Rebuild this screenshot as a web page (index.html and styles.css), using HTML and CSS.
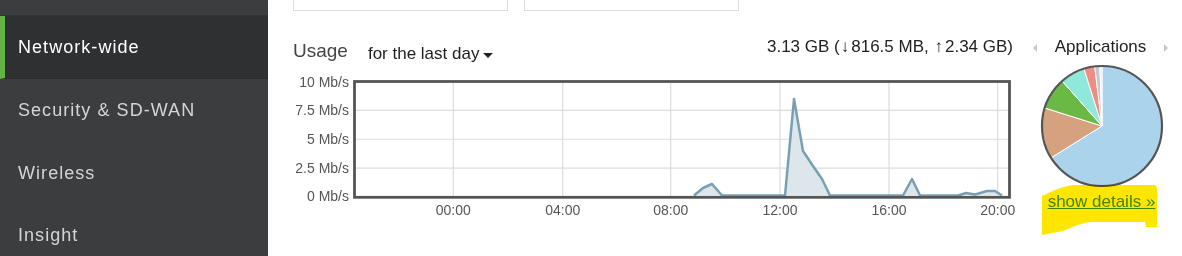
FILE: index.html
```html
<!DOCTYPE html>
<html>
<head>
<meta charset="utf-8">
<link rel="stylesheet" href="styles.css">
</head>
<body>
<div class="page">
  <nav class="sidebar">
    <div class="side-top"></div>
    <div class="nav-item active">Network-wide</div>
    <div class="nav-item">Security &amp; SD-WAN</div>
    <div class="nav-item">Wireless</div>
    <div class="nav-item">Insight</div>
  </nav>
  <main class="main">
    <div class="top-boxes">
      <div class="box"></div>
      <div class="box"></div>
    </div>
    <div class="content">
      <section class="usage">
        <div class="usage-head">
          <div class="usage-title">Usage</div>
          <div class="range">for the last day<span class="caret"></span></div>
          <div class="stats">3.13 GB (<span class="arr">↓</span>816.5 MB, <span class="arr">↑</span>2.34 GB)</div>
        </div>
        <svg class="chart" width="722" height="150" viewBox="0 0 722 150">
          <g class="grid">
            <line x1="61.5" y1="40.4" x2="716.5" y2="40.4"/>
            <line x1="61.5" y1="69.25" x2="716.5" y2="69.25"/>
            <line x1="61.5" y1="98.1" x2="716.5" y2="98.1"/>
            <line x1="160.3" y1="11.5" x2="160.3" y2="127"/>
            <line x1="269.7" y1="11.5" x2="269.7" y2="127"/>
            <line x1="377.7" y1="11.5" x2="377.7" y2="127"/>
            <line x1="487" y1="11.5" x2="487" y2="127"/>
            <line x1="596" y1="11.5" x2="596" y2="127"/>
            <line x1="704.7" y1="11.5" x2="704.7" y2="127"/>
          </g>
          <polygon class="area" points="401,125.5 410,118 419,114 429,125.5 492,125.5 501,29 510,81 520,96 529,109 537,125.5 610,125.5 619,109 627,125.5 665,125.5 673,123 682,124.5 694,121 702,121 709,125.5"/>
          <polyline class="series" points="401,125.5 410,118 419,114 429,125.5 492,125.5 501,29 510,81 520,96 529,109 537,125.5 610,125.5 619,109 627,125.5 665,125.5 673,123 682,124.5 694,121 702,121 709,125.5"/>
          <rect class="frame" x="61.5" y="11.5" width="655" height="115.8"/>
          <g class="ylab">
            <text x="56" y="16.5">10 Mb/s</text>
            <text x="56" y="45.4">7.5 Mb/s</text>
            <text x="56" y="74.3">5 Mb/s</text>
            <text x="56" y="103.1">2.5 Mb/s</text>
            <text x="56" y="131">0 Mb/s</text>
          </g>
          <g class="xlab">
            <text x="160.3" y="145">00:00</text>
            <text x="269.7" y="145">04:00</text>
            <text x="377.7" y="145">08:00</text>
            <text x="487" y="145">12:00</text>
            <text x="596" y="145">16:00</text>
            <text x="704.7" y="145">20:00</text>
          </g>
        </svg>
      </section>
      <section class="apps">
        <div class="apps-head">
          <span class="arrow-left"></span>
          <span class="apps-title">Applications</span>
          <span class="arrow-right"></span>
        </div>
        <svg class="pie" width="130" height="130" viewBox="0 0 130 130">
          <g class="slices">
            <path fill="#abd3eb" d="M65,65 L65,5 A60,60 0 1,1 14.1,96.8 Z"/>
            <path fill="#d6a17f" d="M65,65 L14.1,96.8 A60,60 0 0,1 7.8,47 Z"/>
            <path fill="#6bb945" d="M65,65 L7.8,47 A60,60 0 0,1 25.2,20.1 Z"/>
            <path fill="#8fe9db" d="M65,65 L25.2,20.1 A60,60 0 0,1 47,7.8 Z"/>
            <path fill="#f08d83" d="M65,65 L47,7.8 A60,60 0 0,1 57.7,5.4 Z"/>
            <path fill="#c3c7d0" d="M65,65 L57.7,5.4 A60,60 0 0,1 62.9,5 Z"/>
            <path fill="#e2e4e8" d="M65,65 L62.9,5 A60,60 0 0,1 65,5 Z"/>
          </g>
          <circle class="pie-rim" cx="65" cy="65" r="60"/>
        </svg>
        <a class="details" href="#">show details »</a>
        <svg class="highlight" width="150" height="210" viewBox="0 0 150 210">
          <path d="M15,160 C26,155 36,150 47,149 L126,149 Q130,149 130,153 L130,191 L119,191 L118,186 L64,186 C53,187 44,192 36,195 L15,199 Z"/>
        </svg>
      </section>
    </div>
  </main>
</div>
</body>
</html>
```

FILE: styles.css
```css
html, body {
  margin: 0;
  padding: 0;
  background: #ffffff;
}

.page {
  display: flex;
  width: 1182px;
  height: 256px;
  overflow: hidden;
  font-family: "Liberation Sans", Arial, sans-serif;
}

.sidebar {
  width: 268px;
  flex: none;
  background: #3c3d3f;
  display: flex;
  flex-direction: column;
  overflow: hidden;
}

.side-top {
  flex: none;
  height: 15px;
  border-bottom: 1px solid #323335;
}

.nav-item {
  flex: none;
  height: 62.6px;
  line-height: 62.6px;
  padding-left: 18px;
  font-size: 18px;
  letter-spacing: 1.05px;
  color: #d3d5d7;
  box-sizing: border-box;
  white-space: nowrap;
}

.nav-item.active {
  height: 63px;
  line-height: 62px;
  background: #2f3032;
  color: #ffffff;
  border-left: 5px solid #64b345;
  padding-left: 13px;
  border-bottom: 1px solid #2a2b2d;
}

.main {
  flex: 1;
  padding-left: 25px;
  display: flex;
  flex-direction: column;
}

.top-boxes {
  display: flex;
  gap: 16px;
  height: 11px;
}

.box {
  width: 215px;
  height: 11px;
  box-sizing: border-box;
  border: 1px solid #dcdcdc;
  border-top: none;
}

.content {
  margin-top: 25px;
  display: flex;
}

.usage {
  width: 722px;
  flex: none;
}

.usage-head {
  display: flex;
  align-items: flex-start;
  height: 34px;
}

.usage-title {
  font-size: 19px;
  line-height: 22px;
  margin-top: 4px;
  color: #46464a;
}

.range {
  font-size: 17px;
  line-height: 20px;
  margin-top: 8px;
  margin-left: 20px;
  color: #222222;
  display: flex;
  align-items: center;
}

.caret {
  display: inline-block;
  width: 0;
  height: 0;
  border-left: 5px solid transparent;
  border-right: 5px solid transparent;
  border-top: 5px solid #222222;
  margin-left: 4px;
  margin-top: 2px;
}

.stats {
  margin-left: auto;
  margin-right: 2px;
  margin-top: 1px;
  font-size: 17px;
  line-height: 20px;
  color: #222222;
}

.arr {
  display: inline-block;
  margin: 0 2px 0 1px;
}

.chart {
  display: block;
}

.grid line {
  stroke: #dcdcdc;
  stroke-width: 1.2;
}

.area {
  fill: #dde6eb;
}

.series {
  fill: none;
  stroke: #7b9fb2;
  stroke-width: 2.5;
  stroke-linejoin: round;
}

.frame {
  fill: none;
  stroke: #555555;
  stroke-width: 2.8;
}

.ylab text,
.xlab text {
  font-family: "Liberation Sans", Arial, sans-serif;
  font-size: 14px;
  fill: #555555;
}

.ylab text {
  text-anchor: end;
}

.xlab text {
  text-anchor: middle;
}

.apps {
  position: relative;
  width: 149px;
  margin-left: 12px;
  flex: none;
  display: flex;
  flex-direction: column;
  align-items: center;
}

.apps-head {
  align-self: stretch;
  display: flex;
  align-items: center;
  padding: 0 8px 0 6px;
  margin-top: 1px;
  height: 20px;
}

.apps-title {
  flex: 1;
  text-align: center;
  font-size: 17px;
  line-height: 20px;
  color: #222222;
}

.arrow-left,
.arrow-right {
  width: 0;
  height: 0;
  border-top: 4px solid transparent;
  border-bottom: 4px solid transparent;
  margin-top: 1px;
}

.arrow-left {
  border-right: 4px solid #c8c8c8;
}

.arrow-right {
  border-left: 4px solid #c8c8c8;
}

.pie {
  display: block;
  margin-top: 4px;
}

.slices path {
  stroke: #ffffff;
  stroke-width: 1;
}

.pie-rim {
  fill: none;
  stroke: #555555;
  stroke-width: 2.2;
}

.details {
  margin-top: 1px;
  font-size: 17px;
  line-height: 20px;
  color: #3f941c;
  text-decoration: underline;
  white-space: nowrap;
}

.highlight {
  position: absolute;
  left: 0;
  top: 0;
  mix-blend-mode: multiply;
  pointer-events: none;
}

.highlight path {
  fill: #ffe600;
}
```
